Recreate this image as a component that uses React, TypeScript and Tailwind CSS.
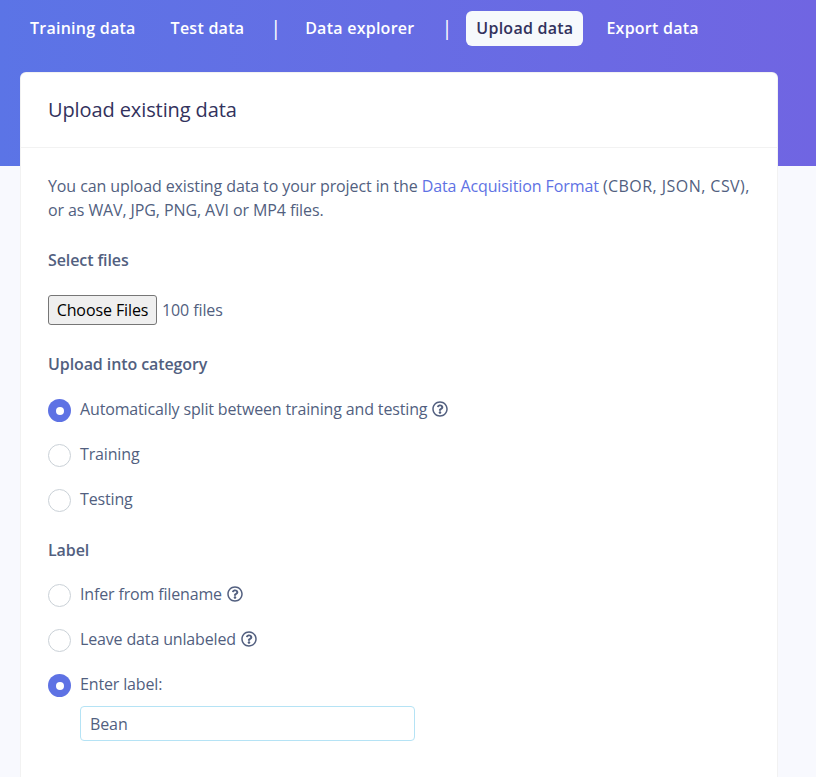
import React from "react";

function Help() {
  return (
    <svg width="16" height="16" viewBox="0 0 512 512" className="inline-block ml-[5px] align-[-2px]" fill="#525f7f">
      <path d="M256 8C119 8 8 119 8 256s111 248 248 248 248-111 248-248S393 8 256 8zm0 448c-110.500 0-200-89.500-200-200S145.500 56 256 56s200 89.500 200 200-89.500 200-200 200zm107.200-255.200c0 67-72.400 68-72.400 92.800V300c0 6.600-5.400 12-12 12h-45.600c-6.600 0-12-5.400-12-12v-8.700c0-35.700 27.100-50 47.600-61.500 17.500-9.800 28.300-16.500 28.300-29.600 0-17.200-22-28.700-39.800-28.700-23.200 0-33.900 11-49 30-4.100 5.100-11.500 6.100-16.700 2.100l-27.800-21.100c-5.100-3.900-6.300-11.100-2.700-16.400C184.800 131.500 214.900 112 261.800 112c49.100 0 101.400 38.300 101.400 88.800zM298 368c0 23.200-18.800 42-42 42s-42-18.800-42-42 18.800-42 42-42 42 18.800 42 42z" />
    </svg>
  );
}

function Radio({ checked, children }: { checked?: boolean; children: React.ReactNode }) {
  return (
    <div className="flex items-start h-[23px] mb-[22px]">
      {checked ? (
        <span className="mt-[1px] w-[23px] h-[23px] rounded-full bg-[#5e72e4] flex items-center justify-center shrink-0">
          <span className="w-[8px] h-[8px] rounded-full bg-white" />
        </span>
      ) : (
        <span className="mt-[1px] w-[23px] h-[23px] rounded-full bg-white border border-[#cad1d7] shrink-0" />
      )}
      <span className="ml-[9px] text-[16px] leading-[22px] tracking-[-0.15px] text-[#525f7f]">{children}</span>
    </div>
  );
}

export default function App() {
  const tab = "text-[16px] font-semibold text-white px-[10px] tracking-[0.25px]";
  return (
    <div className="relative h-[777px] overflow-hidden bg-[#f8f9fe] font-['Open_Sans',sans-serif] tracking-[-0.1px]">
      <div className="h-[166px] bg-gradient-to-r from-[#5b74e6] to-[#7065e2]">
        <nav className="flex items-center h-[56px] pl-[20px]">
          <span className={tab}>Training data</span>
          <span className={`${tab} ml-[15px]`}>Test data</span>
          <span className="text-white text-[20px] ml-[16px]">|</span>
          <span className={`${tab} ml-[14px]`}>Data explorer</span>
          <span className="text-white text-[20px] ml-[17px]">|</span>
          <span className="ml-[14px] h-[35px] flex items-center text-[16px] font-semibold tracking-[0.25px] text-[#32325d] bg-[#f6f9fc] rounded-[6px] px-[10px]">Upload data</span>
          <span className={`${tab} ml-[13px]`}>Export data</span>
        </nav>
      </div>
      <div className="absolute left-[20px] top-[72px] w-[758px] h-[760px] bg-white rounded-[6px] border border-[#0000000d]">
        <div className="h-[75px] flex items-center px-[27px] border-b border-[#0000000d]">
          <h3 className="text-[20px] font-medium text-[#32325d] tracking-[-0.1px]">Upload existing data</h3>
        </div>
        <div className="px-[27px] pt-[26px] text-[16px] text-[#525f7f]">
          <p className="leading-[24px] whitespace-nowrap">
            You can upload existing data to your project in the <span className="text-[#5e72e4]">Data Acquisition Format</span>{" "}
            <span className="tracking-[0.45px]">(CBOR, JSON, CSV),</span>
            <br />
            or as WAV, JPG, PNG, AVI or MP4 files.
          </p>
          <div className="mt-[26px] font-semibold">Select files</div>
          <div className="mt-[23px] flex items-center">
            <span className="h-[30px] w-[109px] flex items-center justify-center bg-[#efefef] border border-[#767676] rounded-[3px] text-black">Choose Files</span>
            <span className="ml-[5px]">100 files</span>
          </div>
          <div className="mt-[27px] mb-[22px] font-semibold">Upload into category</div>
          <Radio checked>Automatically split between training and testing<Help /></Radio>
          <Radio>Training</Radio>
          <Radio>Testing</Radio>
          <div className="mt-[27px] mb-[21px] font-semibold">Label</div>
          <Radio>Infer from filename<Help /></Radio>
          <Radio>Leave data unlabeled<Help /></Radio>
          <Radio checked>Enter label:</Radio>
          <div className="-mt-[12px] ml-[32px] w-[335px] h-[35px] border border-[#b5e3f5] rounded-[4px] flex items-center px-[9px]">Bean</div>
        </div>
      </div>
    </div>
  );
}
